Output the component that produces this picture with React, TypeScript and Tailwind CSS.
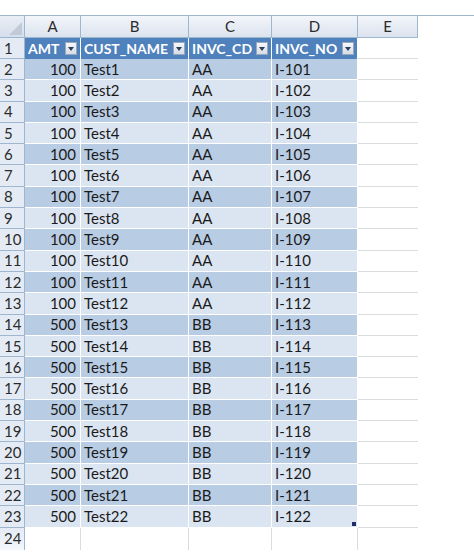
import React from "react";

const font = { fontFamily: "Lato, 'Open Sans', sans-serif" };

interface Row {
  amt: number;
  name: string;
  cd: string;
  no: string;
}

const rows: Row[] = Array.from({ length: 22 }, (_, i) => ({
  amt: i < 12 ? 100 : 500,
  name: `Test${i + 1}`,
  cd: i < 12 ? "AA" : "BB",
  no: `I-${101 + i}`,
}));

function DropBtn() {
  return (
    <span className="ml-auto mr-[3px] flex h-[13px] w-[12px] shrink-0 items-center justify-center border border-[#9aa8bb] bg-gradient-to-b from-[#f6f8fb] to-[#d7dde6]">
      <svg width="6" height="4" viewBox="0 0 6 4">
        <path d="M0 0h6L3 4z" fill="#2d3e58" />
      </svg>
    </span>
  );
}

function HeadCell({ label, w }: { label: string; w: string }) {
  return (
    <div className={`${w} flex items-center border-r border-white pl-[3px] text-[14px] font-bold text-white`}>
      <span className="whitespace-nowrap">{label}</span>
      <DropBtn />
    </div>
  );
}

export default function App() {
  return (
    <div className="h-[559px] w-[474px] bg-white pt-[15px] text-[15px] leading-none text-[#1a1a1a]" style={font}>
      {/* column letters */}
      <div className="flex h-[23px] border-t border-[#9eb6ce]">
        <div className="relative w-[25px] border-r border-b border-[#9eb6ce] bg-gradient-to-b from-[#e9eef5] to-[#d5dfec]">
          <svg className="absolute right-[2px] bottom-[2px]" width="13" height="13" viewBox="0 0 13 13">
            <path d="M13 0v13H0z" fill="#c1cad6" />
          </svg>
        </div>
        {[
          ["A", "w-[56px]"],
          ["B", "w-[108px]"],
          ["C", "w-[83px]"],
          ["D", "w-[86px]"],
          ["E", "w-[60px]"],
        ].map(([l, w]) => (
          <div
            key={l}
            className={`${w} flex items-center justify-center border-r border-b border-[#9eb6ce] bg-gradient-to-b from-[#f3f6fa] to-[#dbe3ee] text-[#2b2b2b]`}
          >
            {l}
          </div>
        ))}
      </div>

      {/* row 1: table header */}
      <div className="flex h-[21px]">
        <div className="flex w-[25px] items-center border-r border-b border-[#9eb6ce] bg-[#e4ebf5] pl-[4px] text-[#2b2b2b]">1</div>
        <div className="flex bg-[#4f81bd]">
          <HeadCell label="AMT" w="w-[56px]" />
          <HeadCell label="CUST_NAME" w="w-[108px]" />
          <HeadCell label="INVC_CD" w="w-[83px]" />
          <HeadCell label="INVC_NO" w="w-[86px]" />
        </div>
        <div className="w-[60px] border-b border-[#dadcdd]" />
      </div>

      {rows.map((r, i) => {
        const band = i % 2 === 0 ? "bg-[#b8cce4]" : "bg-[#dbe5f1]";
        const last = i === rows.length - 1;
        return (
          <div key={r.name} className="flex h-[21.3px]">
            <div className="flex w-[25px] items-center border-r border-b border-[#9eb6ce] bg-[#e4ebf5] pl-[4px] text-[#2b2b2b]">
              {i + 2}
            </div>
            <div className={`flex ${band}`}>
              <div className="flex w-[56px] items-center justify-end border-r border-b border-white pr-[4px]">{r.amt}</div>
              <div className="flex w-[108px] items-center border-r border-b border-white pl-[3px]">{r.name}</div>
              <div className="flex w-[83px] items-center border-r border-b border-white pl-[3px]">{r.cd}</div>
              <div className="relative flex w-[86px] items-center border-r border-b border-white pl-[3px]">
                {r.no}
                {last && <span className="absolute right-[1px] bottom-[1px] h-[4px] w-[4px] bg-[#1f2f6b]" />}
              </div>
            </div>
            <div className="w-[60px] border-b border-[#dadcdd]" />
          </div>
        );
      })}

      {/* row 24 */}
      <div className="flex h-[22px]">
        <div className="flex w-[25px] items-center border-r border-[#9eb6ce] bg-gradient-to-b from-[#e4ebf5] to-[#f4f7fb] pl-[4px] text-[#2b2b2b]">
          24
        </div>
        <div className="w-[56px] border-r border-[#dadcdd]" />
        <div className="w-[108px] border-r border-[#dadcdd]" />
        <div className="w-[83px] border-r border-[#dadcdd]" />
        <div className="w-[86px] border-r border-[#dadcdd]" />
      </div>
    </div>
  );
}
